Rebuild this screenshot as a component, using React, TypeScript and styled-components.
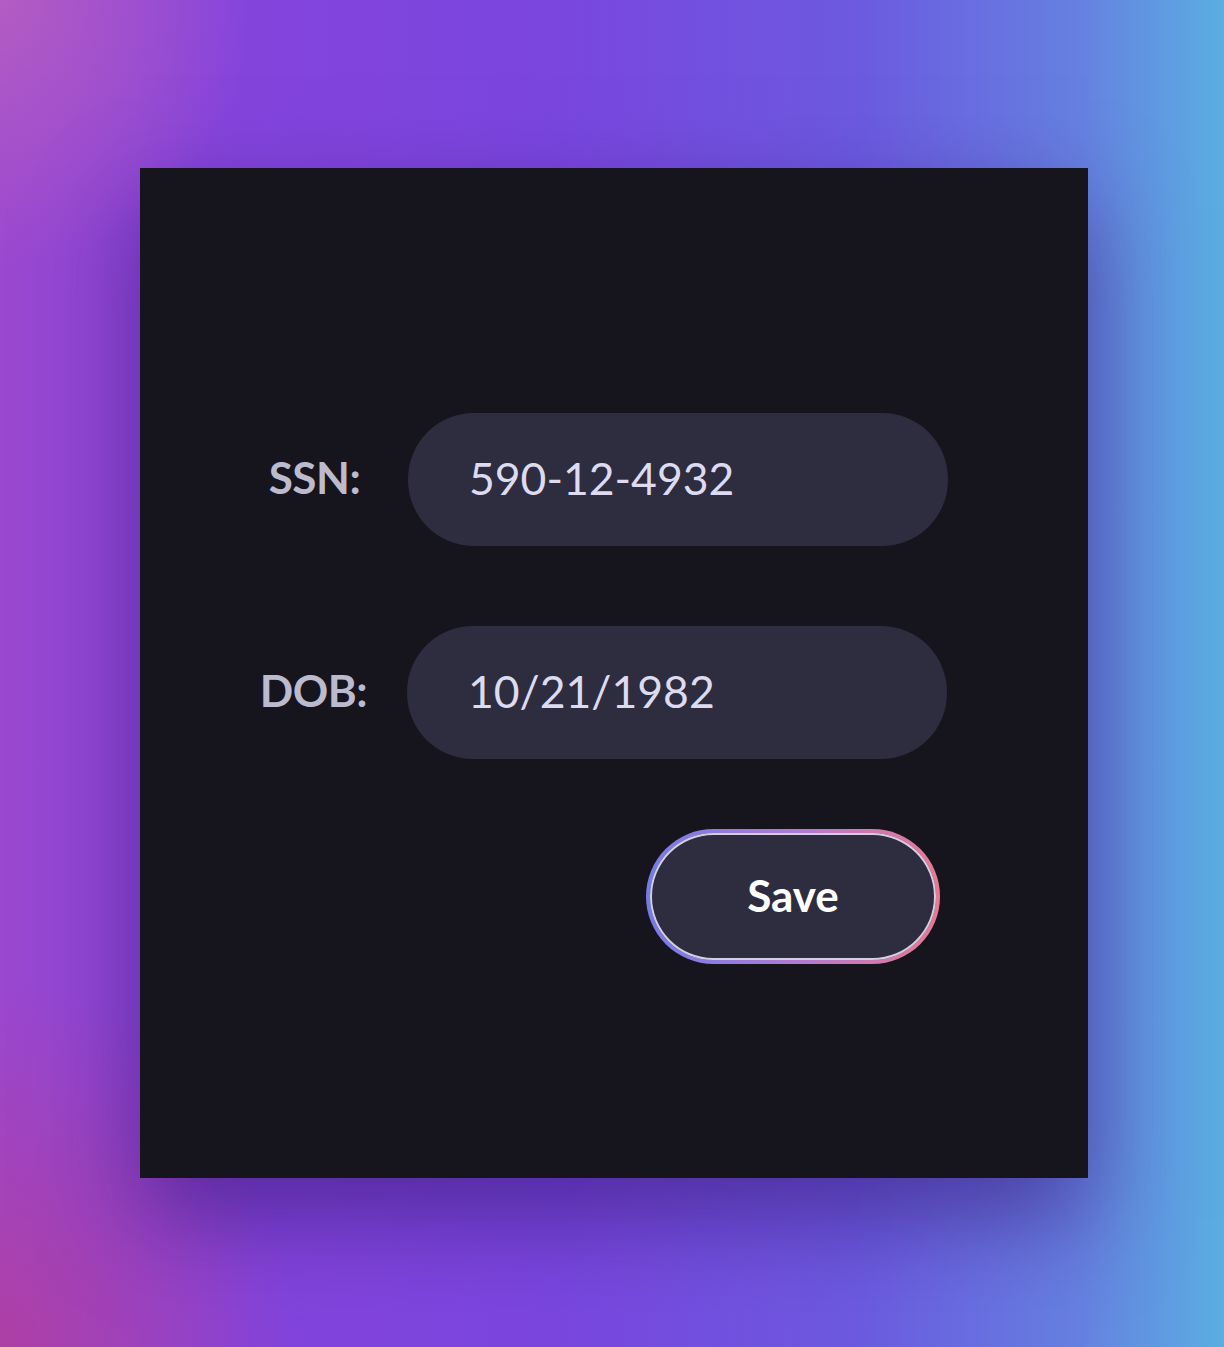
import React from "react";
import styled, { createGlobalStyle } from "styled-components";

const GlobalStyle = createGlobalStyle`
  html, body {
    margin: 0;
    padding: 0;
  }
  body {
    font-family: "Lato", "Noto Sans", sans-serif;
  }
`;

const Page = styled.div`
  width: 1224px;
  height: 1347px;
  box-sizing: border-box;
  padding-top: 168px;
  padding-left: 140px;
  overflow: hidden;
  background:
    radial-gradient(ellipse 420px 520px at 0% 100%, rgba(180, 60, 150, 0.75), transparent 70%),
    radial-gradient(ellipse 360px 380px at 0% 0%, rgba(190, 100, 190, 0.7), transparent 70%),
    linear-gradient(
      90deg,
      #9a48d0 0%,
      #8444dc 20%,
      #7a46de 45%,
      #6c5ae0 70%,
      #6680e0 88%,
      #5aaee2 100%
    );
`;

const Card = styled.div`
  width: 948px;
  height: 1010px;
  box-sizing: border-box;
  background: #16151d;
  box-shadow: 0 40px 90px rgba(50, 20, 110, 0.55);
  padding: 245px 0 0 100px;
  display: flex;
  flex-direction: column;
  gap: 80px;
`;

const Row = styled.div<{ $shift?: number }>`
  display: grid;
  grid-template-columns: 147px 540px;
  column-gap: 20px;
  align-items: center;
  margin-left: ${(p) => p.$shift || 0}px;
`;

const Label = styled.label`
  text-align: center;
  font-size: 44px;
  font-weight: 700;
  color: #bcbacd;
  letter-spacing: -0.5px;
  padding-bottom: 6px;
`;

const Field = styled.input`
  height: 133px;
  width: 540px;
  box-sizing: border-box;
  border: none;
  outline: none;
  border-radius: 66px;
  background: #2e2c3f;
  padding: 0 0 5px 61px;
  font-family: "Lato", "Noto Sans", sans-serif;
  font-size: 44.5px;
  color: #dddbf0;
`;

const Actions = styled.div`
  display: flex;
  width: 700px;
  margin-top: -10px;
  justify-content: flex-end;
`;

const SaveButton = styled.button`
  width: 294px;
  height: 135px;
  border: none;
  border-radius: 68px;
  padding: 4px;
  background: linear-gradient(90deg, #737ce8 0%, #b07ad4 50%, #ea7890 100%);
  cursor: pointer;
`;

const SaveInner = styled.span`
  display: flex;
  align-items: center;
  justify-content: center;
  width: 100%;
  height: 100%;
  box-sizing: border-box;
  border-radius: 64px;
  background: #2e2c3f;
  box-shadow: inset 0 0 0 2px rgba(240, 235, 255, 0.85);
  font-family: "Lato", "Noto Sans", sans-serif;
  font-size: 44px;
  font-weight: 700;
  color: #ffffff;
  padding-bottom: 3px;
`;

export default function App() {
  return (
    <>
      <GlobalStyle />
      <Page>
        <Card>
          <Row $shift={1}>
            <Label htmlFor="ssn">SSN:</Label>
            <Field id="ssn" defaultValue="590-12-4932" />
          </Row>
          <Row>
            <Label htmlFor="dob">DOB:</Label>
            <Field id="dob" defaultValue="10/21/1982" />
          </Row>
          <Actions>
            <SaveButton>
              <SaveInner>Save</SaveInner>
            </SaveButton>
          </Actions>
        </Card>
      </Page>
    </>
  );
}
